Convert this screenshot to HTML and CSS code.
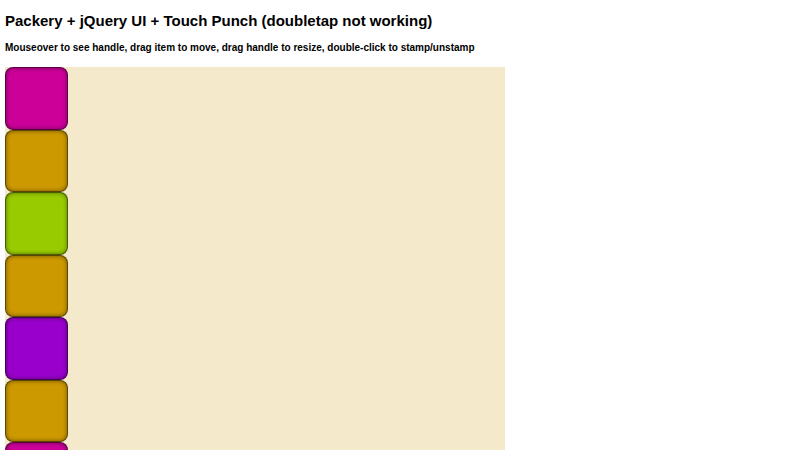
FILE: index.html
```html
<!DOCTYPE html>
<html>
<head>
<meta charset="utf-8">
<link rel="stylesheet" href="styles.css">
</head>
<body>
<h1 class="title">Packery + jQuery UI + Touch Punch (doubletap not working)</h1>
<p class="hint">Mouseover to see handle, drag item to move, drag handle to resize, double-click to stamp/unstamp</p>
<div class="packery">
  <div class="item c1"></div>
  <div class="item c2"></div>
  <div class="item c3"></div>
  <div class="item c2"></div>
  <div class="item c4"></div>
  <div class="item c2"></div>
  <div class="item c1"></div>
  <div class="item c3"></div>
</div>
</body>
</html>
```
FILE: styles.css
```css
html, body {
  margin: 0;
  background: #fff;
}
body {
  padding: 12px 5px;
  font-family: "Liberation Sans", Arial, sans-serif;
  color: #000;
  overflow: hidden;
}
.title {
  margin: 0 0 12px;
  font-size: 15px;
  line-height: 18px;
  font-weight: bold;
}
.hint {
  margin: 0 0 13px;
  font-size: 10px;
  line-height: 12px;
  font-weight: bold;
}
.packery {
  width: 500px;
  min-height: 600px;
  background: #f5e9cc;
}
.item {
  width: 12.5%;
  height: 62.5px;
  box-sizing: border-box;
  border: 1px solid rgba(0, 0, 0, 0.55);
  border-radius: 8px;
  box-shadow: inset 0 0 4px rgba(0, 0, 0, 0.45);
}
.c1 { background: #cc0099; }
.c2 { background: #cc9900; }
.c3 { background: #99cc00; }
.c4 { background: #9900cc; }
```
